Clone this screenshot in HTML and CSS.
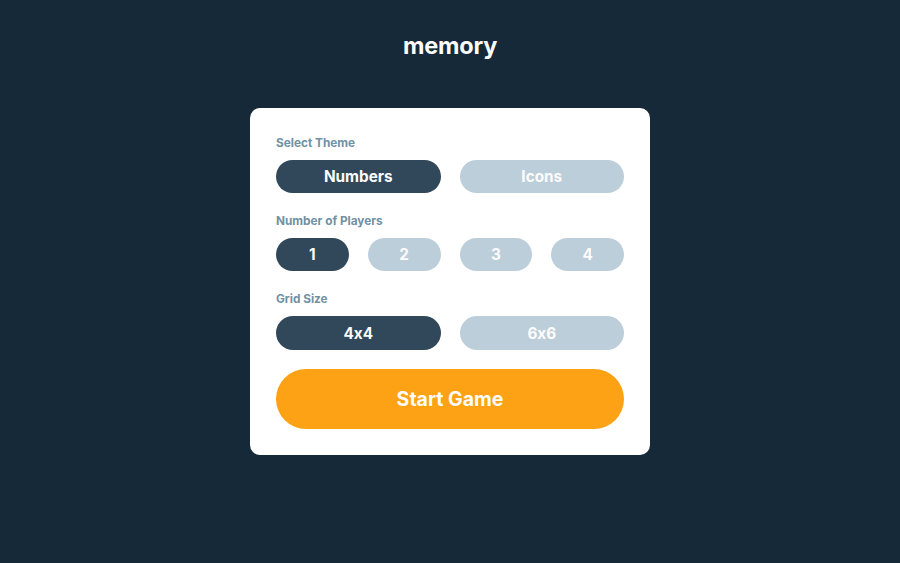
FILE: index.html
```html
<!DOCTYPE html>
<html lang="en">
<head>
<meta charset="utf-8">
<title>memory</title>
<link rel="stylesheet" href="styles.css">
</head>
<body>
<main class="page">
  <h1 class="logo">memory</h1>
  <section class="card">
    <div class="group">
      <div class="label">Select Theme</div>
      <div class="row">
        <button class="opt active">Numbers</button>
        <button class="opt">Icons</button>
      </div>
    </div>
    <div class="group">
      <div class="label">Number of Players</div>
      <div class="row">
        <button class="opt active">1</button>
        <button class="opt">2</button>
        <button class="opt">3</button>
        <button class="opt">4</button>
      </div>
    </div>
    <div class="group">
      <div class="label">Grid Size</div>
      <div class="row">
        <button class="opt active grid">4x4</button>
        <button class="opt grid">6x6</button>
      </div>
    </div>
    <button class="start">Start Game</button>
  </section>
</main>
</body>
</html>
```
FILE: styles.css
```css
html, body {
  margin: 0;
  padding: 0;
  background: #152938;
  height: 100%;
}
body {
  font-family: "Inter", "Noto Sans", "Liberation Sans", sans-serif;
  font-feature-settings: "calt" 0;
}
.page {
  display: flex;
  flex-direction: column;
  align-items: center;
  padding-top: 31px;
}
.logo {
  margin: 0;
  color: #FCFCFC;
  font-size: 23.5px;
  line-height: 29px;
  font-weight: 700;
  letter-spacing: -0.2px;
}
.card {
  margin-top: 48px;
  width: 400px;
  box-sizing: border-box;
  background: #FFFFFF;
  border-radius: 10px;
  padding: 28px 26px 26px;
  display: flex;
  flex-direction: column;
}
.group {
  display: flex;
  flex-direction: column;
  gap: 10px;
  margin-bottom: 21px;
}
.group:nth-child(3) {
  margin-bottom: 19px;
}
.label {
  color: #7191A5;
  font-size: 11.8px;
  line-height: 14px;
  font-weight: 700;
}
.row {
  display: flex;
  gap: 19px;
}
.opt {
  flex: 1;
  height: 33px;
  border: none;
  border-radius: 17px;
  background: #BCCED9;
  color: #FCFCFC;
  font-family: inherit;
  font-feature-settings: "calt" 0;
  font-size: 15.3px;
  font-weight: 700;
  padding: 0;
}
.opt.grid {
  height: 34px;
}
.opt.active {
  background: #304859;
}
.start {
  height: 60px;
  border: none;
  border-radius: 30px;
  background: #FDA214;
  color: #FCFCFC;
  font-family: inherit;
  font-size: 19.5px;
  font-weight: 700;
  padding: 0;
}
```
